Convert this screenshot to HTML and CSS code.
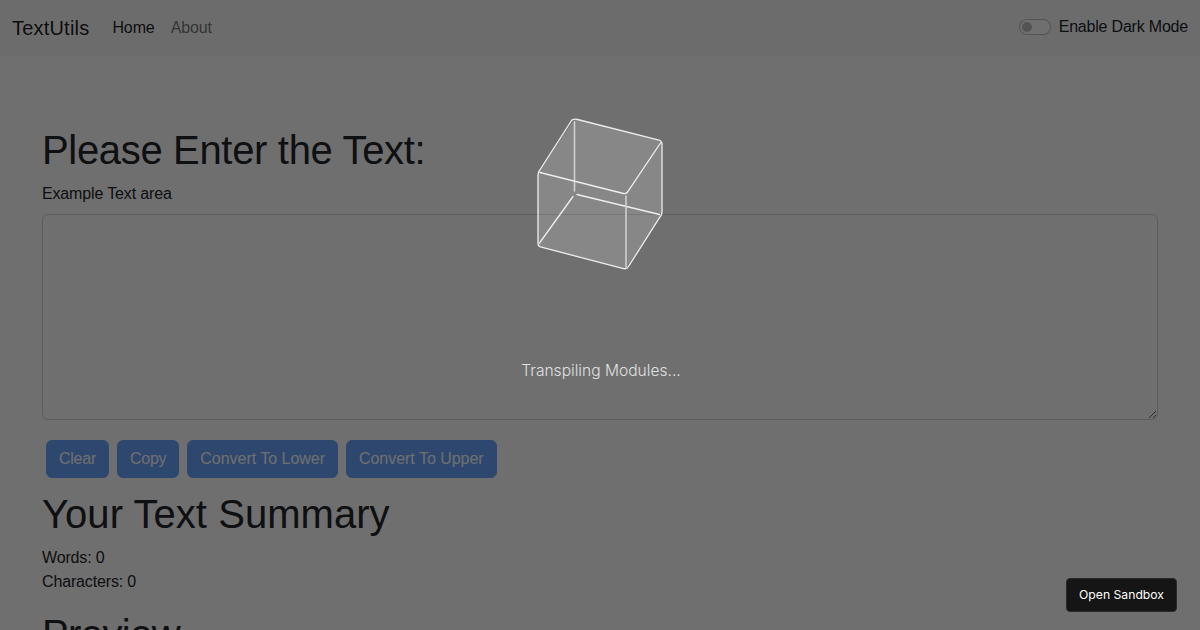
FILE: index.html
```html
<!DOCTYPE html>
<html lang="en">
<head>
    <meta charset="UTF-8">
    <meta name="viewport" content="width=device-width, initial-scale=1.0">
    <title>TextUtils</title>
    <link rel="stylesheet" href="styles.css">
</head>
<body>
    <nav class="navbar">
        <a class="brand" href="#">TextUtils</a>
        <ul class="navLinks">
            <li><a class="navLink active" href="#">Home</a></li>
            <li><a class="navLink" href="#">About</a></li>
        </ul>
        <div class="darkSwitch">
            <span class="switchTrack"><span class="switchKnob"></span></span>
            <label>Enable Dark Mode</label>
        </div>
    </nav>

    <div class="alertSpace"></div>

    <div class="container">
        <h1 class="enterTitle">Please Enter the Text:</h1>
        <label class="textLabel" for="textBox">Example Text area</label>
        <textarea id="textBox" class="textBox" rows="8"></textarea>
        <div class="buttons">
            <button class="btn btnShort" disabled>Clear</button>
            <button class="btn btnShort" disabled>Copy</button>
            <button class="btn" disabled>Convert To Lower</button>
            <button class="btn" disabled>Convert To Upper</button>
        </div>
        <h1>Your Text Summary</h1>
        <p class="summary">Words: 0<br>Characters: 0</p>
        <h1 class="previewTitle">Preview</h1>
    </div>

    <!-- loading overlay -->
    <div class="overlay">
        <svg class="cube" width="200" height="190" viewBox="500 100 200 190">
            <path class="cubeBody" d="M574.5 119 L661.5 141 L661.5 215 L626 269 L538 246 L538 172 Z"/>
            <g class="cubeEdges">
                <path d="M577 194.5 L659.5 214.5"/>
                <path d="M573 196.5 L539.5 243"/>
                <path class="backEdge" d="M574.5 122 L574.5 191"/>
                <path d="M577.5 119.5 L659 140 Q662 141 662 144 L662 212 Q662 215 660 217 L628.5 266.5 Q626.5 269.5 623.5 268.5 L540.5 247 Q538 246 538 243.5 L538 175 Q538 172.5 539.5 170.5 L571.5 120.5 Q573 118.5 577.5 119.5 Z"/>
                <path d="M540 172.5 L623.5 193.5 Q626 194 627.5 192 L660.5 143"/>
                <path class="backEdge" d="M626 196 L626 267"/>
            </g>
        </svg>
        <div class="loadingText">Transpiling Modules...</div>
        <button class="sandboxBtn">Open Sandbox</button>
    </div>
</body>
</html>
```

FILE: styles.css
```css
* {
  box-sizing: border-box;
}

html, body {
  height: 630px;
  overflow: hidden;
}

body {
  position: relative;
  margin: 0;
  background-color: #fff;
  color: #212529;
  font-family: "Liberation Sans", Arial, sans-serif;
  font-size: 16px;
  letter-spacing: -0.15px;
  line-height: 1.5;
}

.navbar {
  display: flex;
  align-items: center;
  height: 56px;
  padding: 8px 12px;
  background-color: #f8f9fa;
}

.brand {
  margin-right: 15px;
  color: rgba(0, 0, 0, 0.9);
  font-size: 20px;
  letter-spacing: 0.2px;
  text-decoration: none;
}

.navLinks {
  display: flex;
  flex-grow: 1;
  margin: 0;
  padding: 0;
  list-style: none;
}

.navLink {
  display: block;
  padding: 8px;
  color: rgba(0, 0, 0, 0.55);
  letter-spacing: -0.1px;
  text-decoration: none;
}

.navLink.active {
  color: rgba(0, 0, 0, 0.9);
}

.darkSwitch {
  display: flex;
  align-items: center;
  gap: 8px;
  margin-bottom: 2px;
  letter-spacing: -0.2px;
}

.switchTrack {
  display: block;
  width: 32px;
  height: 16px;
  padding: 2px;
  border: 1px solid rgba(0, 0, 0, 0.25);
  border-radius: 32px;
  background-color: #fff;
}

.switchKnob {
  display: block;
  width: 10px;
  height: 10px;
  border-radius: 50%;
  background-color: rgba(0, 0, 0, 0.25);
}

.alertSpace {
  height: 70px;
}

.container {
  width: 1140px;
  margin: 0 auto;
  padding: 0 12px;
}

h1 {
  margin: 0 0 8px;
  font-size: 40px;
  font-weight: 400;
  letter-spacing: 0.05px;
  line-height: 48px;
}

.enterTitle {
  letter-spacing: -0.33px;
}

.previewTitle {
  letter-spacing: -0.6px;
}

.textLabel {
  display: block;
  margin-bottom: 8px;
}

.textBox {
  display: block;
  width: 100%;
  margin-bottom: 16px;
  padding: 6px 12px;
  border: 1px solid #ced4da;
  border-radius: 6px;
  font: inherit;
}

.buttons {
  display: flex;
  margin-bottom: 8px;
}

.btn {
  margin: 4px;
  padding: 6px 12px;
  border: 1px solid #0d6efd;
  border-radius: 6px;
  background-color: #0d6efd;
  color: #fff;
  font: inherit;
  letter-spacing: -0.03px;
  opacity: 0.62;
}

.btnShort {
  letter-spacing: -0.25px;
}

.summary {
  margin: 0 0 16px;
}

.overlay {
  position: absolute;
  inset: 0;
  background-color: rgba(0, 0, 0, 0.565);
}

.cube {
  position: absolute;
  left: 500px;
  top: 100px;
}

.cubeBody {
  fill: rgba(255, 255, 255, 0.17);
}

.cubeEdges path {
  fill: none;
  stroke: #eee;
  stroke-width: 1.3;
  stroke-linecap: round;
}

.cubeEdges .backEdge {
  stroke: #d0d0d0;
  stroke-width: 1.6;
}

.loadingText {
  position: absolute;
  top: 360px;
  left: 0;
  width: 100%;
  padding-left: 2px;
  color: #e0e0e0;
  font-family: Inter, sans-serif;
  font-size: 15.6px;
  font-weight: 300;
  letter-spacing: 0;
  line-height: 22px;
  text-align: center;
}

.sandboxBtn {
  position: absolute;
  left: 1066px;
  top: 578px;
  width: 111px;
  height: 34px;
  padding: 0 0 2px;
  border: 1px solid #2b2b2b;
  border-radius: 4px;
  background-color: #151515;
  color: #fff;
  font-family: Inter, sans-serif;
  font-size: 12.2px;
  font-weight: 400;
  letter-spacing: 0;
}
```
